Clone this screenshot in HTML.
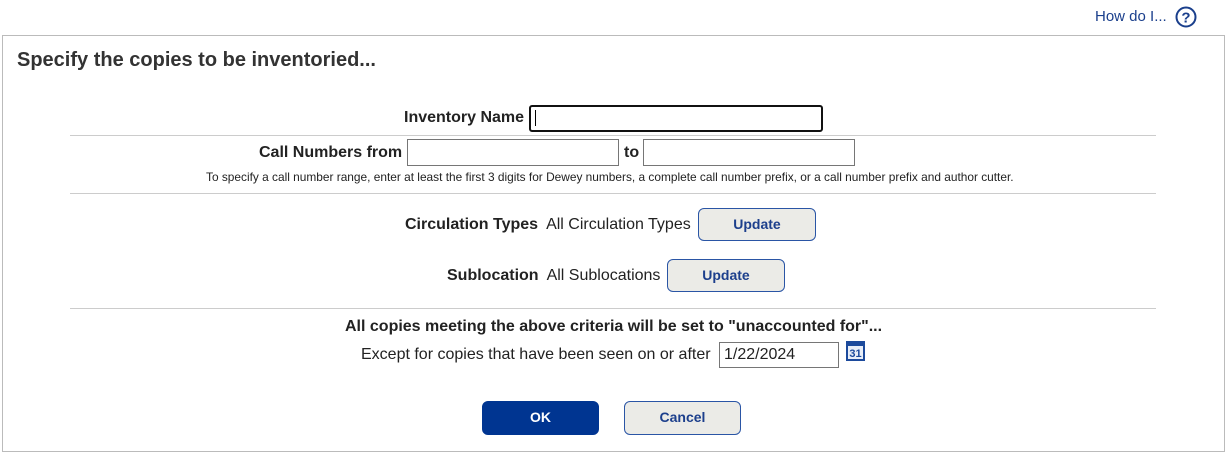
<!DOCTYPE html>
<html><head><style>
body{margin:0;width:1228px;height:454px;background:#fff;font-family:"Liberation Sans",sans-serif;color:#222;position:relative;overflow:hidden}
.a{position:absolute;white-space:nowrap}
.box{position:absolute;left:2px;top:35px;width:1221px;height:415px;border:1px solid #bbb}
.hr{position:absolute;left:70px;width:1086px;height:1px;background:#ccc}
.inp{position:absolute;border:1px solid #767676;background:#fff;box-sizing:border-box}
.btn{position:absolute;box-sizing:border-box;border:1.5px solid #2a55a5;border-radius:6px;background:#ebebe7;color:#1c3f8c;font-weight:bold;font-size:14px;text-align:center;font-family:"Liberation Sans",sans-serif}
b{font-weight:bold}
</style></head><body>
<div class="a" style="left:1095px;top:8px;font-size:15px;color:#1a3f8c">How do I...</div>
<svg class="a" style="left:1175px;top:6px" width="22" height="22" viewBox="0 0 22 22"><circle cx="11" cy="11" r="9.5" fill="#fff" stroke="#1a3f8c" stroke-width="2"/><text x="11" y="16.5" text-anchor="middle" font-family="Liberation Sans" font-weight="bold" font-size="15" fill="#1a3f8c">?</text></svg>
<div class="box"></div>
<div class="a" style="left:17px;top:49px;font-size:20px;font-weight:bold;color:#333">Specify the copies to be inventoried...</div>
<div class="a" style="left:404px;top:109px;font-size:16px;font-weight:bold">Inventory Name</div>
<div class="inp" style="left:529px;top:105px;width:294px;height:27px;border:2px solid #111;border-radius:3px"></div>
<div class="a" style="left:535px;top:110px;width:1px;height:16px;background:#000"></div>
<div class="hr" style="top:135px"></div>
<div class="a" style="left:259px;top:144px;font-size:16px;font-weight:bold">Call Numbers from</div>
<div class="inp" style="left:407px;top:139px;width:212px;height:27px"></div>
<div class="a" style="left:624px;top:144px;font-size:16px;font-weight:bold">to</div>
<div class="inp" style="left:643px;top:139px;width:212px;height:27px"></div>
<div class="a" style="left:206px;top:170px;font-size:12px;transform:scaleX(0.99);transform-origin:left">To specify a call number range, enter at least the first 3 digits for Dewey numbers, a complete call number prefix, or a call number prefix and author cutter.</div>
<div class="hr" style="top:193px"></div>
<div class="a" style="left:405px;top:216px;font-size:16px"><b>Circulation Types</b>&nbsp; All Circulation Types</div>
<div class="btn" style="left:698px;top:208px;width:118px;height:33px;line-height:30px">Update</div>
<div class="a" style="left:447px;top:267px;font-size:16px"><b>Sublocation</b>&nbsp; All Sublocations</div>
<div class="btn" style="left:667px;top:259px;width:118px;height:33px;line-height:30px">Update</div>
<div class="hr" style="top:308px"></div>
<div class="a" style="left:345px;top:318px;font-size:16px;font-weight:bold">All copies meeting the above criteria will be set to "unaccounted for"...</div>
<div class="a" style="left:361px;top:346px;font-size:16px">Except for copies that have been seen on or after</div>
<div class="inp" style="left:719px;top:342px;width:120px;height:26px"></div>
<div class="a" style="left:724px;top:346px;font-size:16px">1/22/2024</div>
<svg class="a" style="left:846px;top:341px" width="19" height="20" viewBox="0 0 19 20"><rect x="0" y="0" width="19" height="20" fill="#1c4a9c"/><rect x="2" y="5" width="15" height="13" fill="#e8eef8"/><text x="9.5" y="16" text-anchor="middle" font-family="Liberation Sans" font-weight="bold" font-size="11" fill="#1c4a9c">31</text></svg>
<div class="btn" style="left:482px;top:401px;width:117px;height:34px;line-height:31px;background:#003591;border-color:#003591;color:#fff">OK</div>
<div class="btn" style="left:624px;top:401px;width:117px;height:34px;line-height:31px">Cancel</div>
</body></html>
